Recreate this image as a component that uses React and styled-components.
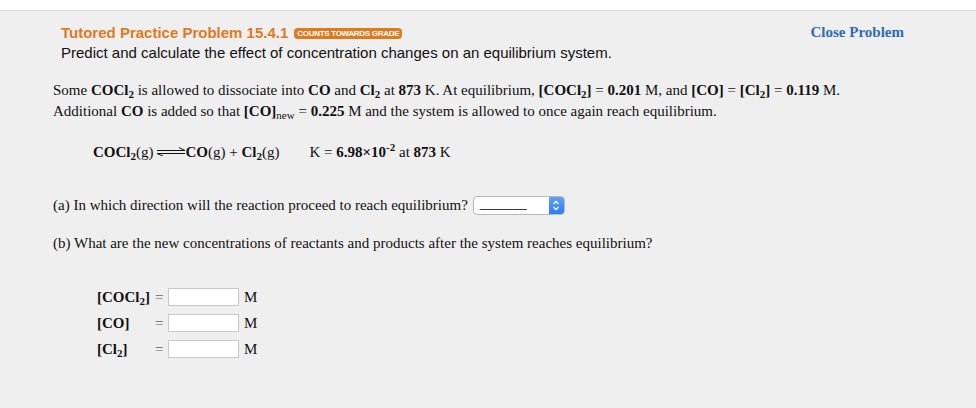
import styled, { createGlobalStyle } from "styled-components";

const Global = createGlobalStyle`
  html, body { margin: 0; padding: 0; background: #fff; }
  body { font-family: "Liberation Serif", "Times New Roman", serif; }
`;

const Equil = () => (
  <svg width="30" height="9" viewBox="0 0 30 9" style={{ margin: "0 0 0 2px", verticalAlign: "1px" }}>
    <path d="M1 3.5 H29 M29 3.5 L23 0.5" stroke="#111" strokeWidth="1" fill="none" />
    <path d="M1 6.5 H29 M1 6.5 L7 9" stroke="#111" strokeWidth="1" fill="none" />
  </svg>
);

const App = () => (
  <Page>
    <Global />
    <TopStrip />
    <Panel>
      <Header>
        <div>
          <TitleRow>
            <Title>Tutored Practice Problem 15.4.1</Title>
            <Badge>COUNTS TOWARDS GRADE</Badge>
          </TitleRow>
          <Subtitle>Predict and calculate the effect of concentration changes on an equilibrium system.</Subtitle>
        </div>
        <CloseLink>Close Problem</CloseLink>
      </Header>

      <Para>
        Some <b>COCl<sub>2</sub></b> is allowed to dissociate into <b>CO</b> and <b>Cl<sub>2</sub></b> at{" "}
        <b>873</b> K. At equilibrium, <b>[COCl<sub>2</sub>]</b> = <b>0.201</b> M, and <b>[CO]</b> ={" "}
        <b>[Cl<sub>2</sub>]</b> = <b>0.119</b> M.
        <br />
        Additional <b>CO</b> is added so that <b>[CO]</b><sub>new</sub> = <b>0.225</b> M and the system is
        allowed to once again reach equilibrium.
      </Para>

      <Reaction>
        <span>
          <b>COCl<sub>2</sub></b>(g)
          <Equil />
          <b>CO</b>(g) + <b>Cl<sub>2</sub></b>(g)
        </span>
        <span>
          K = <b>6.98×10<sup>-2</sup></b> at <b>873</b> K
        </span>
      </Reaction>

      <Question>
        (a) In which direction will the reaction proceed to reach equilibrium?
        <Select>
          <SelectText>_______</SelectText>
          <SelectCap>
            <svg width="8" height="11" viewBox="0 0 8 11">
              <path d="M1.5 4 L4 1.5 L6.5 4 M1.5 7 L4 9.5 L6.5 7" stroke="#fff" strokeWidth="1.4" fill="none" />
            </svg>
          </SelectCap>
        </Select>
      </Question>

      <QuestionB>(b) What are the new concentrations of reactants and products after the system reaches equilibrium?</QuestionB>

      <Answers>
        <Label>[COCl<sub>2</sub>]</Label>
        <Eq>=</Eq>
        <Box />
        <Unit>M</Unit>
        <Label>[CO]</Label>
        <Eq>=</Eq>
        <Box />
        <Unit>M</Unit>
        <Label>[Cl<sub>2</sub>]</Label>
        <Eq>=</Eq>
        <Box />
        <Unit>M</Unit>
      </Answers>
    </Panel>
  </Page>
);

const Page = styled.div`
  width: 976px;
  height: 408px;
  display: flex;
  flex-direction: column;
  overflow: hidden;
`;

const TopStrip = styled.div`
  height: 10px;
  background: #fff;
  border-bottom: 1px solid #dcdcdc;
  flex: none;
`;

const Panel = styled.div`
  flex: 1;
  background: #efefef;
  padding: 13px 72px 0 53px;
  color: #111;
`;

const Header = styled.div`
  display: flex;
  justify-content: space-between;
  align-items: flex-start;
  padding-left: 8px;
`;

const TitleRow = styled.div`
  display: flex;
  align-items: center;
  gap: 6px;
`;

const Title = styled.div`
  font-family: "Liberation Sans", Arial, sans-serif;
  font-weight: bold;
  font-size: 15px;
  line-height: 17px;
  color: #e07a1f;
`;

const Badge = styled.span`
  font-family: "Liberation Sans", Arial, sans-serif;
  font-weight: bold;
  font-size: 8px;
  line-height: 11px;
  color: #fff;
  background: #e07a1f;
  border-radius: 4px;
  padding: 0 3px;
  margin-top: 2px;
  letter-spacing: -0.3px;
`;

const Subtitle = styled.div`
  font-family: "Liberation Sans", Arial, sans-serif;
  font-size: 15px;
  line-height: 18px;
  margin-top: 3px;
  color: #111;
`;

const CloseLink = styled.a`
  font-weight: bold;
  font-size: 15px;
  color: #2b6cb5;
  margin-top: 0;
  cursor: pointer;
`;

const Para = styled.p`
  margin: 18px 0 0;
  font-size: 15px;
  line-height: 21px;
  sub { font-size: 11px; line-height: 0; vertical-align: -3px; }
`;

const Reaction = styled.div`
  margin: 20px 0 0 40px;
  font-size: 15px;
  line-height: 20px;
  display: flex;
  gap: 30px;
  sub { font-size: 11px; line-height: 0; vertical-align: -3px; }
  sup { font-size: 11px; line-height: 0; vertical-align: 6px; }
`;

const Question = styled.div`
  margin-top: 33px;
  font-size: 15px;
  line-height: 20px;
  display: flex;
  align-items: center;
`;

const Select = styled.div`
  margin-left: 5px;
  width: 90px;
  height: 17px;
  background: #fff;
  border: 1px solid #b9b9b9;
  border-radius: 4px;
  display: flex;
  overflow: hidden;
`;

const SelectText = styled.div`
  flex: 1;
  font-family: "Liberation Sans", Arial, sans-serif;
  font-size: 12px;
  line-height: 13px;
  padding-left: 6px;
  color: #222;
`;

const SelectCap = styled.div`
  width: 15px;
  background: linear-gradient(#5ba3f8, #2d7cf2);
  display: flex;
  align-items: center;
  justify-content: center;
`;

const QuestionB = styled.div`
  margin-top: 18px;
  font-size: 15px;
  line-height: 20px;
`;

const Answers = styled.div`
  margin: 35px 0 0 44px;
  display: grid;
  grid-template-columns: 58px 13px 71px auto;
  grid-auto-rows: 18px;
  row-gap: 8px;
  align-items: center;
  font-size: 15px;
  sub { font-size: 11px; line-height: 0; vertical-align: -3px; }
`;

const Label = styled.div`
  font-weight: bold;
  line-height: 18px;
`;

const Eq = styled.div`
  color: #666;
  line-height: 18px;
`;

const Box = styled.div`
  height: 16px;
  background: #fff;
  border: 1px solid #c9c9c9;
`;

const Unit = styled.div`
  margin-left: 5px;
  line-height: 18px;
`;

export default App;
